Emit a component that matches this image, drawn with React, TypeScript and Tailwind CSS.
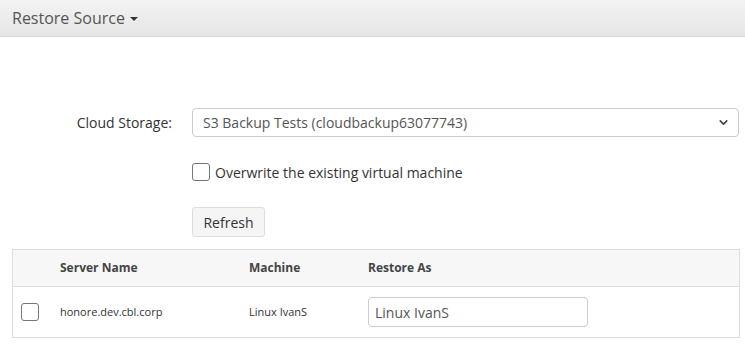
import { ChevronDown } from "lucide-react";

const font = { fontFamily: '"Open Sans", "Liberation Sans", sans-serif' };

export default function App() {
  return (
    <div className="w-[745px] h-[350px] bg-white text-[#333]" style={font}>
      <div className="h-[37px] flex items-center px-3 border-b border-[#d6d6d6] bg-gradient-to-b from-[#f3f3f3] to-[#e6e6e6]">
        <span className="text-[16px] text-[#555]">Restore Source</span>
        <span className="ml-[5px] mt-[2px] w-0 h-0 border-l-[4px] border-r-[4px] border-t-[4px] border-l-transparent border-r-transparent border-t-[#333]" />
      </div>

      <div className="pt-[71px]">
        <div className="flex items-center">
          <label className="w-[172px] text-right text-[14px] text-[#333]">Cloud Storage:</label>
          <div className="ml-[20px] mr-[6px] flex-1 h-[29px] border border-[#ccc] rounded-[4px] flex items-center justify-between pl-[10px] pr-[8px]">
            <span className="text-[14px] text-[#555]">S3 Backup Tests (cloudbackup63077743)</span>
            <ChevronDown className="w-[13px] h-[13px] text-[#444]" strokeWidth={3} />
          </div>
        </div>

        <div className="ml-[192px] mt-[26px] flex items-center h-[18px]">
          <span className="w-[18px] h-[18px] border border-[#767676] rounded-[3px] bg-white" />
          <span className="ml-[5px] text-[14px] text-[#333]">Overwrite the existing virtual machine</span>
        </div>

        <div className="ml-[192px] mt-[26px]">
          <button className="w-[73px] h-[30px] border border-[#ddd] rounded-[3px] bg-[#f5f5f5] text-[14px] text-[#333]">
            Refresh
          </button>
        </div>

        <div className="ml-[12px] mr-[5px] mt-[12px] border border-[#ddd]">
          <div className="h-[37px] flex items-center bg-[#f7f7f7] border-b border-[#ddd] text-[12px] font-bold text-[#444]">
            <span className="w-[47px]" />
            <span className="w-[189px]">Server Name</span>
            <span className="w-[119px]">Machine</span>
            <span>Restore As</span>
          </div>
          <div className="h-[50px] flex items-center text-[11px] text-[#333]">
            <span className="w-[47px] pl-[8px]">
              <span className="block w-[18px] h-[18px] border border-[#767676] rounded-[3px]" />
            </span>
            <span className="w-[189px]">honore.dev.cbl.corp</span>
            <span className="w-[119px] text-[#333]">Linux IvanS</span>
            <div className="w-[220px] h-[30px] border border-[#ccc] rounded-[4px] flex items-center pl-[6px] text-[14px] text-[#555]">
              Linux IvanS
            </div>
          </div>
        </div>
      </div>
    </div>
  );
}
